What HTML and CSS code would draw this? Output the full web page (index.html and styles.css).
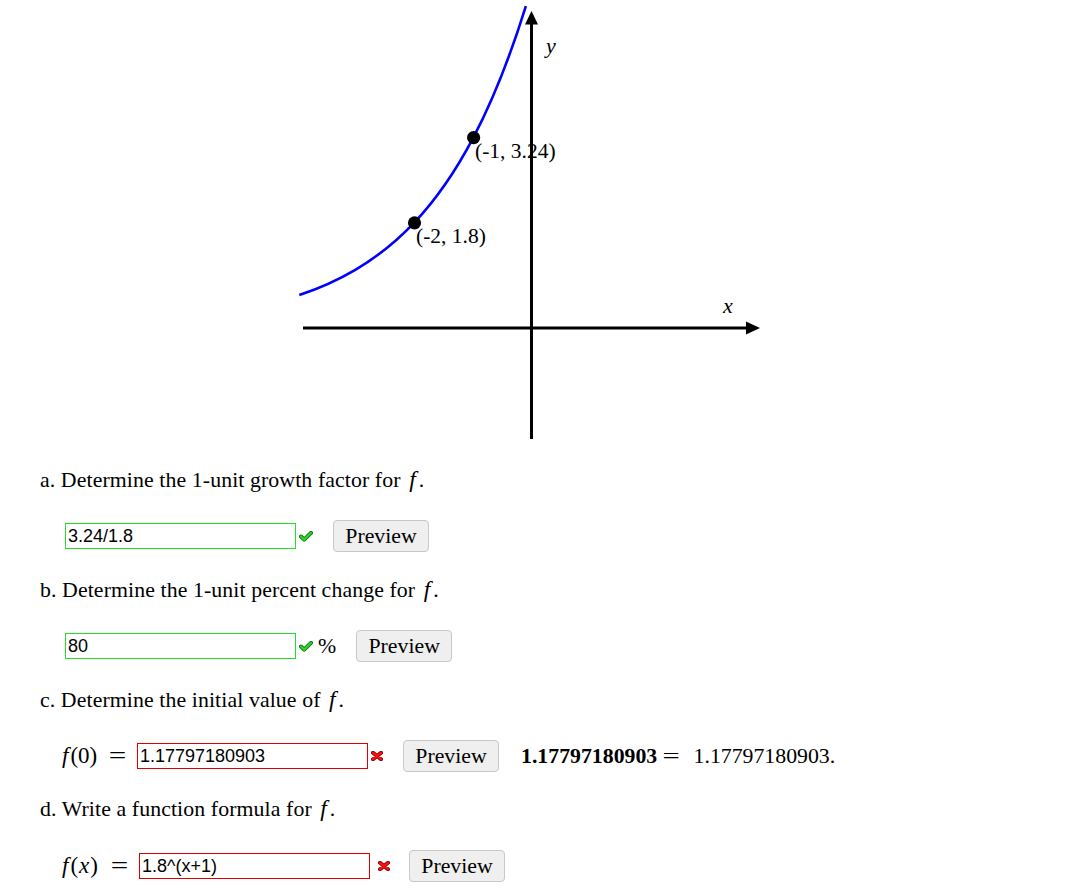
FILE: index.html
```html
<!DOCTYPE html>
<html>
<head>
<meta charset="utf-8">
<link rel="stylesheet" href="styles.css">
</head>
<body>
<svg class="graph" viewBox="295 0 470 440" width="470" height="440">
  <line x1="531.5" y1="22" x2="531.5" y2="439" stroke="#000" stroke-width="3"/>
  <polygon points="531.5,11 525,24.5 538,24.5" fill="#000"/>
  <line x1="303" y1="328" x2="748" y2="328" stroke="#000" stroke-width="3"/>
  <polygon points="760,328 746,321.5 746,334.5" fill="#000"/>
  <path transform="translate(1.3,0.8)" d="M298,294.25 C316.68,287.97 335.32,279.98 354,269 C373.67,257.44 393.33,242.61 413,221.8 C432.67,201.0 452.33,174.30 472,136.84 C489.52,103.47 507.05,61.61 524.57,5.27" fill="none" stroke="#0000ff" stroke-width="2.6"/>
  <circle cx="473.6" cy="137.6" r="6.6" fill="#000"/>
  <circle cx="414.5" cy="222.8" r="6.6" fill="#000"/>
  <text class="plabel" x="475" y="158">(-1, 3.24)</text>
  <text class="plabel" x="416" y="243">(-2, 1.8)</text>
  <text class="alabel" x="546" y="52.5">y</text>
  <text class="alabel" x="723" y="313">x</text>
</svg>

<div class="q q-a">
  <p class="qtext">a. Determine the 1-unit growth factor for <i class="mi">f</i>.</p>
  <div class="row">
    <input class="ans ok" type="text" value="3.24/1.8" readonly>
    <svg class="mark check" width="14" height="11" viewBox="0 0 14 11"><path d="M2,5.5 L5.2,8.6 L12,1.8" fill="none" stroke="#1a6a1a" stroke-width="4" stroke-linecap="round" stroke-linejoin="round"/><path d="M2,5.5 L5.2,8.6 L12,1.8" fill="none" stroke="#22dd22" stroke-width="2.2" stroke-linecap="round" stroke-linejoin="round"/></svg>
    <button class="preview">Preview</button>
  </div>
</div>

<div class="q q-b">
  <p class="qtext">b. Determine the 1-unit percent change for <i class="mi">f</i>.</p>
  <div class="row">
    <input class="ans ok" type="text" value="80" readonly>
    <svg class="mark check" width="14" height="11" viewBox="0 0 14 11"><path d="M2,5.5 L5.2,8.6 L12,1.8" fill="none" stroke="#1a6a1a" stroke-width="4" stroke-linecap="round" stroke-linejoin="round"/><path d="M2,5.5 L5.2,8.6 L12,1.8" fill="none" stroke="#22dd22" stroke-width="2.2" stroke-linecap="round" stroke-linejoin="round"/></svg>
    <span class="unit">%</span>
    <button class="preview">Preview</button>
  </div>
</div>

<div class="q q-c">
  <p class="qtext">c. Determine the initial value of <i class="mi">f</i>.</p>
  <div class="row row-math">
    <span class="mlabel"><span class="mexpr"><i class="mi">f</i>(0)</span><span class="meq">=</span></span>
    <input class="ans bad" type="text" value="1.17797180903" readonly>
    <svg class="mark cross" width="12" height="10" viewBox="0 0 12 10"><path d="M2,1.8 L10,8.2 M10,1.8 L2,8.2" fill="none" stroke="#8a0000" stroke-width="4" stroke-linecap="round"/><path d="M2,1.8 L10,8.2 M10,1.8 L2,8.2" fill="none" stroke="#ff1010" stroke-width="2.3" stroke-linecap="round"/></svg>
    <button class="preview">Preview</button>
    <span class="result"><b>1.17797180903</b><span class="req">=</span>1.17797180903.</span>
  </div>
</div>

<div class="q q-d">
  <p class="qtext">d. Write a function formula for <i class="mi">f</i>.</p>
  <div class="row row-math">
    <span class="mlabel mlabel-d"><span class="mexpr"><i class="mi">f</i>(<i class="mi mx">x</i>)</span><span class="meq">=</span></span>
    <input class="ans bad" type="text" value="1.8^(x+1)" readonly>
    <svg class="mark cross cross-d" width="12" height="10" viewBox="0 0 12 10"><path d="M2,1.8 L10,8.2 M10,1.8 L2,8.2" fill="none" stroke="#8a0000" stroke-width="4" stroke-linecap="round"/><path d="M2,1.8 L10,8.2 M10,1.8 L2,8.2" fill="none" stroke="#ff1010" stroke-width="2.3" stroke-linecap="round"/></svg>
    <button class="preview preview-d">Preview</button>
  </div>
</div>
</body>
</html>
```

FILE: styles.css
```css
html, body {
  margin: 0;
  padding: 0;
  background: #ffffff;
}

body {
  font-family: "Liberation Serif", "Times New Roman", serif;
  color: #000;
  width: 1082px;
  height: 893px;
  overflow: hidden;
}

.graph {
  display: block;
  margin-left: 295px;
}

.plabel {
  font-family: "Liberation Serif", serif;
  font-size: 21.5px;
  fill: #000;
}

.alabel {
  font-family: "Liberation Serif", serif;
  font-style: italic;
  font-size: 22px;
  fill: #000;
}

.q-a {
  margin-top: 27px;
}

.qtext {
  margin: 0 0 29px 40px;
  height: 24px;
  font-size: 21.8px;
  line-height: 24px;
  white-space: nowrap;
  letter-spacing: 0.1px;
}

.mi {
  font-style: italic;
}

.qtext .mi {
  font-size: 23.5px;
  margin: 0 3px 0 3px;
  letter-spacing: 0;
}

.row {
  display: flex;
  align-items: center;
  height: 32px;
  padding-left: 65px;
  margin-bottom: 25px;
  font-size: 21.8px;
  white-space: nowrap;
}

.q-c .row {
  margin-bottom: 24px;
}

.q-d .qtext {
  margin-bottom: 30px;
}

.row-math {
  padding-left: 62px;
}

.mlabel {
  display: flex;
  align-items: center;
  justify-content: space-between;
  box-sizing: border-box;
  width: 75px;
  padding-right: 13px;
  font-size: 23px;
  line-height: 32px;
  flex: none;
}

.mlabel-d {
  width: 77px;
}

.mexpr .mi {
  margin-right: 2px;
}

.mexpr .mx {
  margin-left: 1px;
  margin-right: 1px;
}

.meq {
  display: inline-block;
  transform: scaleX(1.35);
}

.ans {
  box-sizing: border-box;
  width: 231px;
  height: 26px;
  margin: 0;
  padding: 0 2px;
  border: 1px solid;
  border-radius: 0;
  font-family: "Liberation Sans", Arial, sans-serif;
  font-size: 18px;
  color: #000;
  background: #fff;
  outline: none;
  flex: none;
}

.ans.ok {
  border-color: #22e022;
}

.ans.bad {
  border-color: #e00000;
}

.mark {
  display: block;
  flex: none;
}

.check {
  margin-left: 3px;
}

.cross {
  margin-left: 3px;
}

.cross-d {
  margin-left: 8px;
}

.unit {
  margin-left: 5px;
  font-size: 21.8px;
}

.preview {
  box-sizing: border-box;
  width: 96px;
  height: 32px;
  margin-left: 20px;
  padding: 0;
  border: 1px solid #c8c8c8;
  border-radius: 4px;
  background: #efefef;
  font-family: "Liberation Serif", "Times New Roman", serif;
  font-size: 21.8px;
  color: #000;
  flex: none;
}

.preview-d {
  margin-left: 19px;
}

.result {
  margin-left: 22px;
  font-size: 21.8px;
}

.req {
  display: inline-block;
  margin: 0 16px 0 8px;
  transform: scaleX(1.4);
}
```
